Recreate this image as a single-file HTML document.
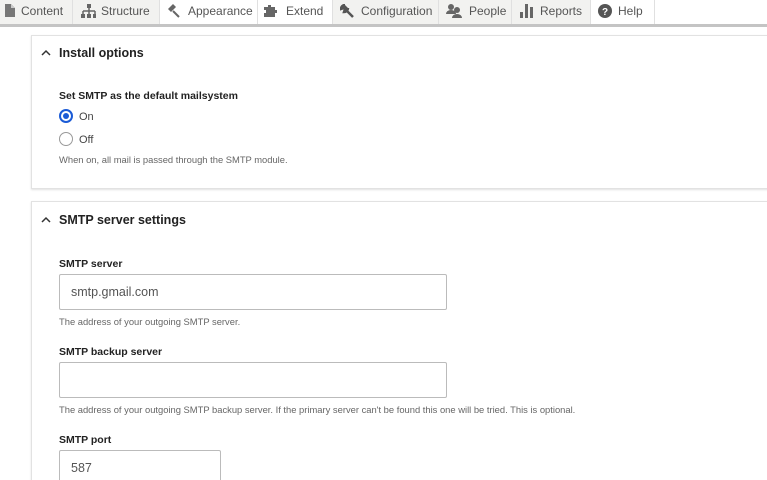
<!DOCTYPE html>
<html><head><meta charset="utf-8"><style>
*{box-sizing:border-box;margin:0;padding:0}
html{width:767px;height:480px;overflow:hidden}
body{width:767px;height:480px;overflow:hidden;background:#fff;font-family:"Liberation Sans",sans-serif;color:#222;position:relative}
.bar{position:absolute;left:0;top:0;width:767px;height:24px;background:#fff;border-bottom:3px solid #c4c4c4;box-sizing:content-box}
.tab{position:absolute;top:0;height:24px;font-size:12px;color:#555;line-height:22px;border-right:1px solid #e0e0e0;background:#f2f2f0}
.tab.w{background:#fff}
.tab svg{position:absolute;top:4px}
.tab span{position:absolute;top:0}
.card{position:absolute;left:31px;width:760px;border:1px solid #e2e2e2;background:#fff;box-shadow:0 1px 2px rgba(0,0,0,.12)}
.h{position:absolute;font-size:12.5px;font-weight:bold;color:#222}
.lab{position:absolute;font-size:10.5px;font-weight:bold;color:#222}
.desc{position:absolute;font-size:9.4px;color:#666}
.inp{position:absolute;border:1px solid #bbb;border-radius:2px;background:#fff;font-size:12.5px;color:#555;padding-left:11px;line-height:34px}
.rad{position:absolute;width:14px;height:14px;border-radius:50%;border:1px solid #999}
</style></head><body>
<div class="bar"></div>
<div class="tab" style="left:0;width:73px"><svg style="left:5px" width="10" height="13" viewBox="0 0 10 13"><path d="M0 0h6l4 4v9H0z" fill="#777"/><path d="M6 0v4h4" fill="#ccc"/></svg><span style="left:21px">Content</span></div>
<div class="tab" style="left:73px;width:87px"><svg style="left:8px" width="15" height="14" viewBox="0 0 15 14"><rect x="6" y="0" width="4" height="4" fill="#666"/><path d="M8 4v3M2 7h12M2 7v3M8 7v3M14 7v3" stroke="#666" stroke-width="1.5"/><rect x="0" y="10" width="4" height="4" fill="#666"/><rect x="6" y="10" width="4" height="4" fill="#666"/><rect x="12" y="10" width="3" height="4" fill="#666"/></svg><span style="left:28px">Structure</span></div>
<div class="tab w" style="left:160px;width:98px"><svg style="left:7px" width="15" height="14" viewBox="0 0 15 14"><path d="M1 5l5-5 3 3-5 5z" fill="#666"/><path d="M6 7l6 6" stroke="#666" stroke-width="2"/></svg><span style="left:28px">Appearance</span></div>
<div class="tab w" style="left:258px;width:75px"><svg style="left:6px" width="14" height="14" viewBox="0 0 14 14"><path d="M0 3h4V1h3v2h4v3h2v3h-2v4H0V9h2V6H0z" fill="#666"/></svg><span style="left:28px">Extend</span></div>
<div class="tab" style="left:333px;width:106px"><svg style="left:7px" width="14" height="14" viewBox="0 0 14 14"><path d="M13 13L6 6M5 1a4 4 0 0 0-4 4l3-1 1 1-1 3a4 4 0 0 0 4-4" stroke="#555" stroke-width="2.5" fill="#555"/></svg><span style="left:28px">Configuration</span></div>
<div class="tab" style="left:439px;width:73px"><svg style="left:7px" width="16" height="14" viewBox="0 0 16 14"><circle cx="5" cy="3" r="3" fill="#666"/><path d="M0 10a5 4 0 0 1 10 0z" fill="#666"/><circle cx="11" cy="6" r="3" fill="#666"/><path d="M6 14a5 4 0 0 1 10 0z" fill="#666"/></svg><span style="left:30px">People</span></div>
<div class="tab" style="left:512px;width:79px"><svg style="left:8px" width="14" height="14" viewBox="0 0 14 14"><rect x="0" y="8" width="3" height="6" fill="#666"/><rect x="5" y="0" width="3" height="14" fill="#666"/><rect x="10" y="3" width="3" height="11" fill="#666"/></svg><span style="left:28px">Reports</span></div>
<div class="tab w" style="left:591px;width:64px"><svg style="left:7px" width="14" height="14" viewBox="0 0 14 14"><circle cx="7" cy="7" r="7" fill="#555"/><text x="7" y="11" font-size="10" font-weight="bold" fill="#fff" text-anchor="middle" font-family="Liberation Sans">?</text></svg><span style="left:27px">Help</span></div>

<div class="card" style="top:35px;height:154px">
  <svg style="position:absolute;left:9px;top:13px" width="10" height="7" viewBox="0 0 10 7"><path d="M1 6l4-4 4 4" stroke="#333" stroke-width="1.5" fill="none"/></svg>
  <div class="h" style="left:27px;top:10px">Install options</div>
  <div class="lab" style="left:27px;top:54px">Set SMTP as the default mailsystem</div>
  <div class="rad" style="left:27px;top:73px;border:2px solid #1b5bd6"><div style="position:absolute;left:2px;top:2px;width:6px;height:6px;border-radius:50%;background:#1b5bd6"></div></div>
  <div style="position:absolute;left:47px;top:75px;font-size:11px;color:#444">On</div>
  <div class="rad" style="left:27px;top:96px"></div>
  <div style="position:absolute;left:47px;top:98px;font-size:11px;color:#444">Off</div>
  <div class="desc" style="left:27px;top:118px">When on, all mail is passed through the SMTP module.</div>
</div>

<div class="card" style="top:201px;height:285px">
  <svg style="position:absolute;left:9px;top:14px" width="10" height="7" viewBox="0 0 10 7"><path d="M1 6l4-4 4 4" stroke="#333" stroke-width="1.5" fill="none"/></svg>
  <div class="h" style="left:27px;top:11px">SMTP server settings</div>
  <div class="lab" style="left:27px;top:56px">SMTP server</div>
  <div class="inp" style="left:27px;top:72px;width:388px;height:36px">smtp.gmail.com</div>
  <div class="desc" style="left:27px;top:114px">The address of your outgoing SMTP server.</div>
  <div class="lab" style="left:27px;top:144px">SMTP backup server</div>
  <div class="inp" style="left:27px;top:160px;width:388px;height:36px"></div>
  <div class="desc" style="left:27px;top:202px">The address of your outgoing SMTP backup server. If the primary server can't be found this one will be tried. This is optional.</div>
  <div class="lab" style="left:27px;top:232px">SMTP port</div>
  <div class="inp" style="left:27px;top:248px;width:162px;height:36px">587</div>
</div>
</body></html>
